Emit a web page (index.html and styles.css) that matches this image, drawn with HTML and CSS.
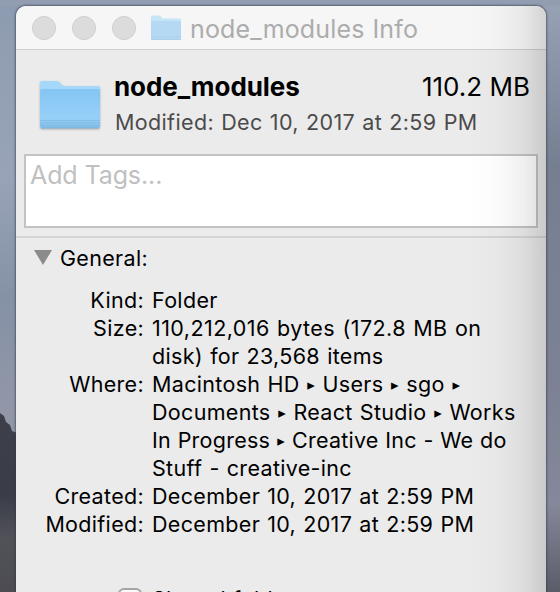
FILE: index.html
```html
<!DOCTYPE html>
<html lang="en">
<head>
    <meta charset="UTF-8">
    <meta name="viewport" content="width=device-width, initial-scale=1.0">
    <title>node_modules Info</title>

    <link rel="stylesheet" href="styles.css">

</head>
<body>

    <svg class="wallpaper" viewBox="0 0 560 592" aria-hidden="true">
        <defs>
            <linearGradient id="sky-left" x1="0" y1="0" x2="0" y2="1">
                <stop offset="0" stop-color="#8d9bb0"/>
                <stop offset="0.3" stop-color="#98a3b8"/>
                <stop offset="0.5" stop-color="#8591a6"/>
                <stop offset="0.7" stop-color="#9297a8"/>
                <stop offset="1" stop-color="#8c8f9e"/>
            </linearGradient>
            <linearGradient id="sky-right" x1="0" y1="0" x2="0" y2="1">
                <stop offset="0" stop-color="#98a2b5"/>
                <stop offset="0.28" stop-color="#767f91"/>
                <stop offset="0.65" stop-color="#7c8293"/>
                <stop offset="0.85" stop-color="#84889a"/>
                <stop offset="1" stop-color="#5a5c68"/>
            </linearGradient>
            <linearGradient id="rock" x1="0" y1="0" x2="0" y2="1">
                <stop offset="0" stop-color="#3d404b"/>
                <stop offset="0.45" stop-color="#3a3d48"/>
                <stop offset="0.7" stop-color="#515158"/>
                <stop offset="1" stop-color="#4c4c52"/>
            </linearGradient>
        </defs>
        <rect width="280" height="592" fill="url(#sky-left)"/>
        <rect x="280" width="280" height="592" fill="url(#sky-right)"/>
        <rect width="560" height="6" fill="#929db1"/>
        <path d="M0 413 L4 416 L6 422 L10 425 L12 431 L20 434 V592 H0 Z" fill="url(#rock)"/>
    </svg>

    <div class="window">

        <header class="titlebar">
            <span class="light"></span>
            <span class="light"></span>
            <span class="light"></span>
            <svg class="title-icon" width="32" height="26" viewBox="0 0 64 52">
                <path d="M2 3 Q2 1 4 1 H19 Q21 1 23 5 Q24 7 26 7 H60 Q62 7 62 9 V48 Q62 50 60 50 H4 Q2 50 2 48 Z" fill="#c5e4f8"/>
                <path d="M2 12 H62 V47 Q62 50 59 50 H5 Q2 50 2 47 Z" fill="#b5d9f3"/>
                <path d="M2 44 H62 M2 49 H62" stroke="#9fc9e6" stroke-width="1.2"/>
            </svg>
            <h1 class="title">node_modules Info</h1>
        </header>

        <section class="summary">
            <svg class="folder" width="64" height="52" viewBox="0 0 64 52">
                <defs>
                    <linearGradient id="folder-front" x1="0" y1="0" x2="0" y2="1">
                        <stop offset="0" stop-color="#85c5f4"/>
                        <stop offset="0.75" stop-color="#96d0f8"/>
                        <stop offset="1" stop-color="#84bfe9"/>
                    </linearGradient>
                </defs>
                <path d="M2 3 Q2 1 4 1 H19 Q21 1 23 4 Q24.500 6 27 6 H60 Q62 6 62 8 V46 Q62 48 60 48 H4 Q2 48 2 46 Z" fill="#a5d8fa"/>
                <path d="M2 11 Q2 9 4 9 H60 Q62 9 62 11 V46 Q62 48 60 48 H4 Q2 48 2 46 Z" fill="url(#folder-front)"/>
                <path d="M2 40.500 H62 M2 43 H62 M2 45.500 H62" stroke="#78b4df" stroke-width="0.6"/>
                <path d="M3 48 H61" stroke="#6ba6cf" stroke-width="0.7"/>
            </svg>
            <div class="summary-text">
                <div class="summary-top">
                    <strong class="name">node_modules</strong>
                    <span class="total">110.2 MB</span>
                </div>
                <div class="changed">Modified: Dec 10, 2017 at 2:59 PM</div>
            </div>
        </section>

        <div class="tags">Add Tags...</div>

        <section class="general">
            <h2 class="section-title"><span class="disclosure"></span>General:</h2>

            <dl class="details">
                <dt>Kind:</dt>
                <dd>Folder</dd>
                <dt>Size:</dt>
                <dd><span class="bytes">110,212,016 bytes (172.8 MB on</span><br>disk) for 23,568 items</dd>
                <dt>Where:</dt>
                <dd>
                    Macintosh HD <i class="arrow">▸</i> Users <i class="arrow">▸</i> sgo <i class="arrow">▸</i><br>
                    Documents <i class="arrow">▸</i> React Studio <i class="arrow">▸</i> Works<br>
                    <span class="tight">In Progress <i class="arrow">▸</i> Creative Inc - We do</span><br>
                    Stuff - creative-inc
                </dd>
                <dt>Created:</dt>
                <dd>December 10, 2017 at 2:59 PM</dd>
                <dt>Modified:</dt>
                <dd>December 10, 2017 at 2:59 PM</dd>
            </dl>

            <div class="shared"><span class="checkbox"></span><span class="shared-label">Shared folder</span></div>
        </section>

        <div class="edge-shade"></div>

    </div>

</body>
</html>
```
FILE: styles.css
```css
* {
    box-sizing: border-box;
}

body {
    margin: 0;
    width: 560px;
    height: 592px;
    overflow: hidden;
    padding: 6px 14px 0 16px;
    position: relative;
    font-family: Inter, "Liberation Sans", sans-serif;
    font-size: 21.5px;
    line-height: 28px;
    letter-spacing: 0.32px;
    word-spacing: 0.8px;
    color: #000;
}

h1, h2, dl, dd {
    margin: 0;
    font-size: inherit;
    font-weight: 400;
}

.wallpaper {
    position: absolute;
    left: 0;
    top: 0;
    width: 560px;
    height: 592px;
}

.window {
    position: relative;
    width: 530px;
    height: 586px;
    overflow: hidden;
    background-color: #ebebeb;
    border-radius: 10px 10px 0 0;
    box-shadow: 0 0 2px 1px rgba(50, 56, 75, 0.6);
}

.titlebar {
    display: flex;
    align-items: center;
    height: 44px;
    padding-left: 16px;
    background-color: #f6f6f6;
    border-bottom: 1px solid #cfcfcf;
}

.light {
    width: 24px;
    height: 24px;
    margin-right: 16px;
    border: 1px solid #cdcdcd;
    border-radius: 50%;
    background-color: #dcdcdc;
}

.title-icon {
    margin: 1px 0 0 -2px;
}

.title {
    margin: 2px 0 0 8px;
    font-size: 25px;
    letter-spacing: 0.15px;
    color: #acacac;
    white-space: nowrap;
}

.summary {
    display: flex;
    height: 104px;
    padding: 21px 16px 0 22px;
}

.folder {
    margin-top: 9px;
    filter: drop-shadow(0 1px 1px rgba(0, 0, 0, 0.25));
}

.summary-text {
    flex: 1;
    margin-left: 12px;
}

.summary-top {
    display: flex;
    justify-content: space-between;
    height: 37px;
    line-height: 32px;
    font-size: 26px;
    letter-spacing: 0;
    word-spacing: 0;
    white-space: nowrap;
}

.name {
    font-weight: 700;
    letter-spacing: -0.08px;
}

.changed {
    padding-left: 1px;
    color: #4b4b4b;
    letter-spacing: 0.36px;
    white-space: nowrap;
}

.tags {
    height: 74px;
    margin: 0 8px 8px;
    padding: 4px 4px;
    border: 2px solid #c3c3c3;
    background-color: #fff;
    font-size: 25px;
    line-height: 30px;
    letter-spacing: -0.1px;
    word-spacing: 0;
    color: #c0c0c0;
}

.general {
    border-top: 2px solid #d5d5d5;
    padding-top: 6px;
}

.section-title {
    display: flex;
    align-items: center;
    padding-left: 18px;
}

.disclosure {
    margin: -2px 8px 0 0;
    border-left: 9px solid transparent;
    border-right: 9px solid transparent;
    border-top: 15px solid #8b8b8b;
}

.details {
    display: grid;
    grid-template-columns: 128px 1fr;
    column-gap: 8px;
    margin-top: 14px;
    white-space: nowrap;
}

.details dt {
    text-align: right;
}

.bytes {
    letter-spacing: 0.44px;
}

.tight {
    letter-spacing: 0.24px;
    word-spacing: 0.4px;
}

.arrow {
    position: relative;
    top: -2px;
    margin: 0 0.5px;
    font-family: "DejaVu Sans", sans-serif;
    font-style: normal;
    font-size: 15px;
    line-height: 1;
    letter-spacing: 0;
}

.shared {
    display: flex;
    margin-top: 46px;
    padding-left: 102px;
}

.checkbox {
    width: 24px;
    height: 24px;
    margin: 4px 10px 0 0;
    border: 2px solid #a5a5a5;
    border-radius: 6px;
    background-color: #fafafa;
}

.shared-label {
    padding-top: 1px;
}

/* soft shadow cast over the right side of the window */
.edge-shade {
    position: absolute;
    top: 0;
    right: 0;
    bottom: 0;
    width: 76px;
    background: linear-gradient(to right, rgba(0, 0, 0, 0), rgba(0, 0, 0, 0.02) 40%, rgba(0, 0, 0, 0.06) 70%, rgba(0, 0, 0, 0.14));
}
```
